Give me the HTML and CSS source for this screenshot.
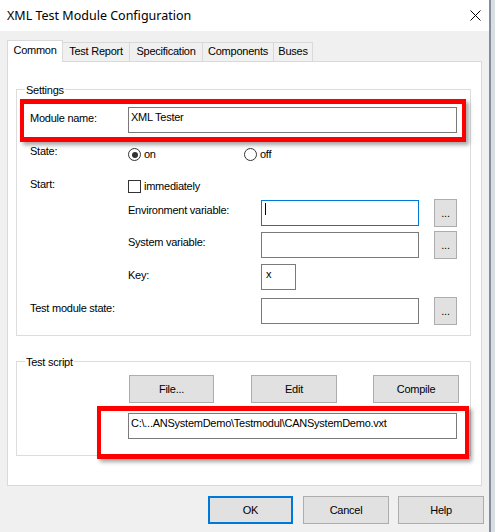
FILE: index.html
```html
<!DOCTYPE html>
<html>
<head>
<meta charset="utf-8">
<link rel="stylesheet" href="styles.css">
</head>
<body>
<div class="window">
  <div class="titlebar">
    <span class="title">XML Test Module Configuration</span>
    <svg class="close" width="11" height="11" viewBox="0 0 11 11"><path d="M0.5 0.5 L10.5 10.5 M10.5 0.5 L0.5 10.5" stroke="#000" stroke-width="1" fill="none"/></svg>
  </div>
  <div class="client">
    <div class="tabs">
      <div class="tab active t-common">Common</div>
      <div class="tab t-report">Test Report</div>
      <div class="tab t-spec">Specification</div>
      <div class="tab t-comp">Components</div>
      <div class="tab t-bus last">Buses</div>
    </div>
    <div class="panel">
      <div class="group settings">
        <span class="legend">Settings</span>
        <div class="row r-name">
          <div class="lbl">Module name:</div>
          <div class="field f-wide">XML Tester</div>
        </div>
        <div class="row r-state">
          <div class="lbl lbl-top">State:</div>
          <div class="opt opt-on"><span class="radio on"></span><span>on</span></div>
          <div class="opt"><span class="radio"></span><span>off</span></div>
        </div>
        <div class="row r-start">
          <div class="lbl lbl-top">Start:</div>
          <div class="opt opt-chk"><span class="check"></span><span>immediately</span></div>
        </div>
        <div class="row r-env">
          <div class="lbl"></div>
          <div class="sublbl">Environment variable:</div>
          <div class="field f-mid focus"><span class="caret"></span></div>
          <button class="btn btn-dots">...</button>
        </div>
        <div class="row r-sys">
          <div class="lbl"></div>
          <div class="sublbl">System variable:</div>
          <div class="field f-mid"></div>
          <button class="btn btn-dots">...</button>
        </div>
        <div class="row r-key">
          <div class="lbl"></div>
          <div class="sublbl">Key:</div>
          <div class="field f-key">x</div>
        </div>
        <div class="row r-tms">
          <div class="lbl lbl-long">Test module state:</div>
          <div class="field f-mid"></div>
          <button class="btn btn-dots">...</button>
        </div>
      </div>
      <div class="group script">
        <span class="legend">Test script</span>
        <div class="row r-btns">
          <button class="btn btn-file">File...</button>
          <button class="btn btn-edit">Edit</button>
          <button class="btn btn-compile">Compile</button>
        </div>
        <div class="row r-path">
          <div class="field f-wide f-path">C:\...ANSystemDemo\Testmodul\CANSystemDemo.vxt</div>
        </div>
      </div>
    </div>
    <div class="actions">
      <button class="btn btn-act btn-ok">OK</button>
      <button class="btn btn-act btn-cancel">Cancel</button>
      <button class="btn btn-act btn-help">Help</button>
    </div>
  </div>
  <div class="mark mark-name"></div>
  <div class="mark mark-path"></div>
</div>
</body>
</html>
```

FILE: styles.css
```css
html, body {
  margin: 0;
  padding: 0;
}
body {
  background: #d9dde4;
  width: 495px;
  height: 532px;
  overflow: hidden;
  font-family: "Liberation Sans", Arial, sans-serif;
  font-size: 11px;
  line-height: 13px;
  letter-spacing: -0.25px;
  color: #000;
}
.window {
  position: relative;
  width: 489px;
  height: 532px;
  background: #f0f0f0;
  border-right: 2px solid #848d9c;
}
.titlebar {
  height: 31px;
  background: #fff;
  display: flex;
  align-items: center;
}
.title {
  font-family: "Noto Sans", "Open Sans", sans-serif;
  font-size: 12.5px;
  line-height: 31px;
  letter-spacing: 0;
  padding-left: 7px;
}
.close {
  margin-left: auto;
  margin-right: 8px;
  margin-top: -1px;
}
.client {
  padding: 9px 7px 0 7px;
}
.tabs {
  display: flex;
  align-items: flex-end;
  height: 21px;
}
.tab {
  box-sizing: border-box;
  height: 19px;
  padding-top: 2px;
  text-align: center;
  background: #f0f0f0;
  border: 1px solid #d9d9d9;
  border-bottom: none;
  border-right: none;
}
.tab.last {
  border-right: 1px solid #d9d9d9;
}
.tab.active {
  position: relative;
  z-index: 1;
  height: 22px;
  margin-bottom: -1px;
  padding-top: 3px;
  background: #fff;
  border-right: 1px solid #d9d9d9;
}
.t-common { width: 56px; }
.t-report { width: 66px; border-left: none; }
.t-spec { width: 73px; }
.t-comp { width: 71px; }
.t-bus { width: 40px; }
.panel {
  box-sizing: border-box;
  width: 475px;
  background: #fff;
  border: 1px solid #d9d9d9;
  padding: 27px 10px 29px 8px;
}
.group {
  position: relative;
  border: 1px solid #dcdcdc;
}
.settings {
  padding: 17px 13px 10px 13px;
}
.script {
  margin-top: 25px;
  padding: 13px 13px 16px 13px;
}
.legend {
  position: absolute;
  top: -6px;
  left: 8px;
  padding: 0 1px;
  background: #fff;
}
.row {
  display: flex;
  align-items: flex-start;
}
.lbl {
  width: 98px;
  flex: none;
  padding-top: 5px;
}
.lbl.lbl-top {
  padding-top: 0;
}
.lbl-long {
  width: 231px;
}
.sublbl {
  width: 133px;
  flex: none;
  padding-top: 5px;
}
.field {
  box-sizing: border-box;
  height: 26px;
  border: 1px solid #7a7a7a;
  background: #fff;
  padding: 3px 2px 0 2px;
  white-space: nowrap;
  overflow: hidden;
  flex: none;
}
.field.focus {
  border-color: #0078d7;
  padding-left: 3px;
}
.caret {
  display: block;
  width: 1px;
  height: 12px;
  margin-top: -1px;
  background: #000;
}
.f-wide { width: 329px; }
.f-mid { width: 158px; margin-top: 1px; }
.f-key { width: 35px; padding-left: 4px; }
.r-state { margin-top: 12px; }
.r-start { margin-top: 17px; }
.r-env { margin-top: 6px; }
.r-sys { margin-top: 4px; }
.r-key { margin-top: 5px; }
.r-tms { margin-top: 7px; }
.opt {
  display: flex;
  align-items: center;
  gap: 3px;
  margin-top: 3px;
  height: 13px;
}
.opt-on { width: 116px; }
.opt-chk { margin-top: 2px; }
.radio {
  box-sizing: border-box;
  width: 13px;
  height: 13px;
  border: 1px solid #333;
  border-radius: 50%;
  background: #fff;
  display: flex;
  align-items: center;
  justify-content: center;
}
.radio.on::after {
  content: "";
  width: 6px;
  height: 6px;
  border-radius: 50%;
  background: #333;
}
.check {
  box-sizing: border-box;
  width: 13px;
  height: 13px;
  border: 1px solid #333;
  background: #fff;
}
.btn {
  box-sizing: border-box;
  height: 28px;
  margin: 0;
  padding: 0;
  border: 1px solid #adadad;
  background: #e1e1e1;
  font-family: "Liberation Sans", Arial, sans-serif;
  font-size: 11px;
  line-height: 13px;
  letter-spacing: -0.25px;
  color: #000;
  flex: none;
}
.btn-dots {
  width: 23px;
  margin-left: 15px;
}
.btn-file { width: 85px; margin-left: 99px; }
.btn-edit { width: 86px; margin-left: 37px; }
.btn-compile { width: 86px; margin-left: 36px; }
.r-path { margin-top: 10px; }
.f-path { margin-left: 98px; }
.actions {
  display: flex;
  justify-content: flex-end;
  margin-top: 10px;
  margin-right: -2px;
}
.btn-act { width: 86px; }
.btn-ok {
  width: 85px;
  border: 2px solid #0078d7;
}
.btn-cancel { margin-left: 10px; }
.btn-help { margin-left: 9px; }
.mark {
  position: absolute;
  box-sizing: border-box;
  border-style: solid;
  border-color: #ff0000;
  border-width: 5px 4px;
  box-shadow: 3px 3px 4px rgba(0, 0, 0, 0.35);
}
.mark-name {
  left: 20px;
  top: 99px;
  width: 446px;
  height: 43px;
}
.mark-path {
  left: 97px;
  top: 406px;
  width: 372px;
  height: 53px;
}
```
